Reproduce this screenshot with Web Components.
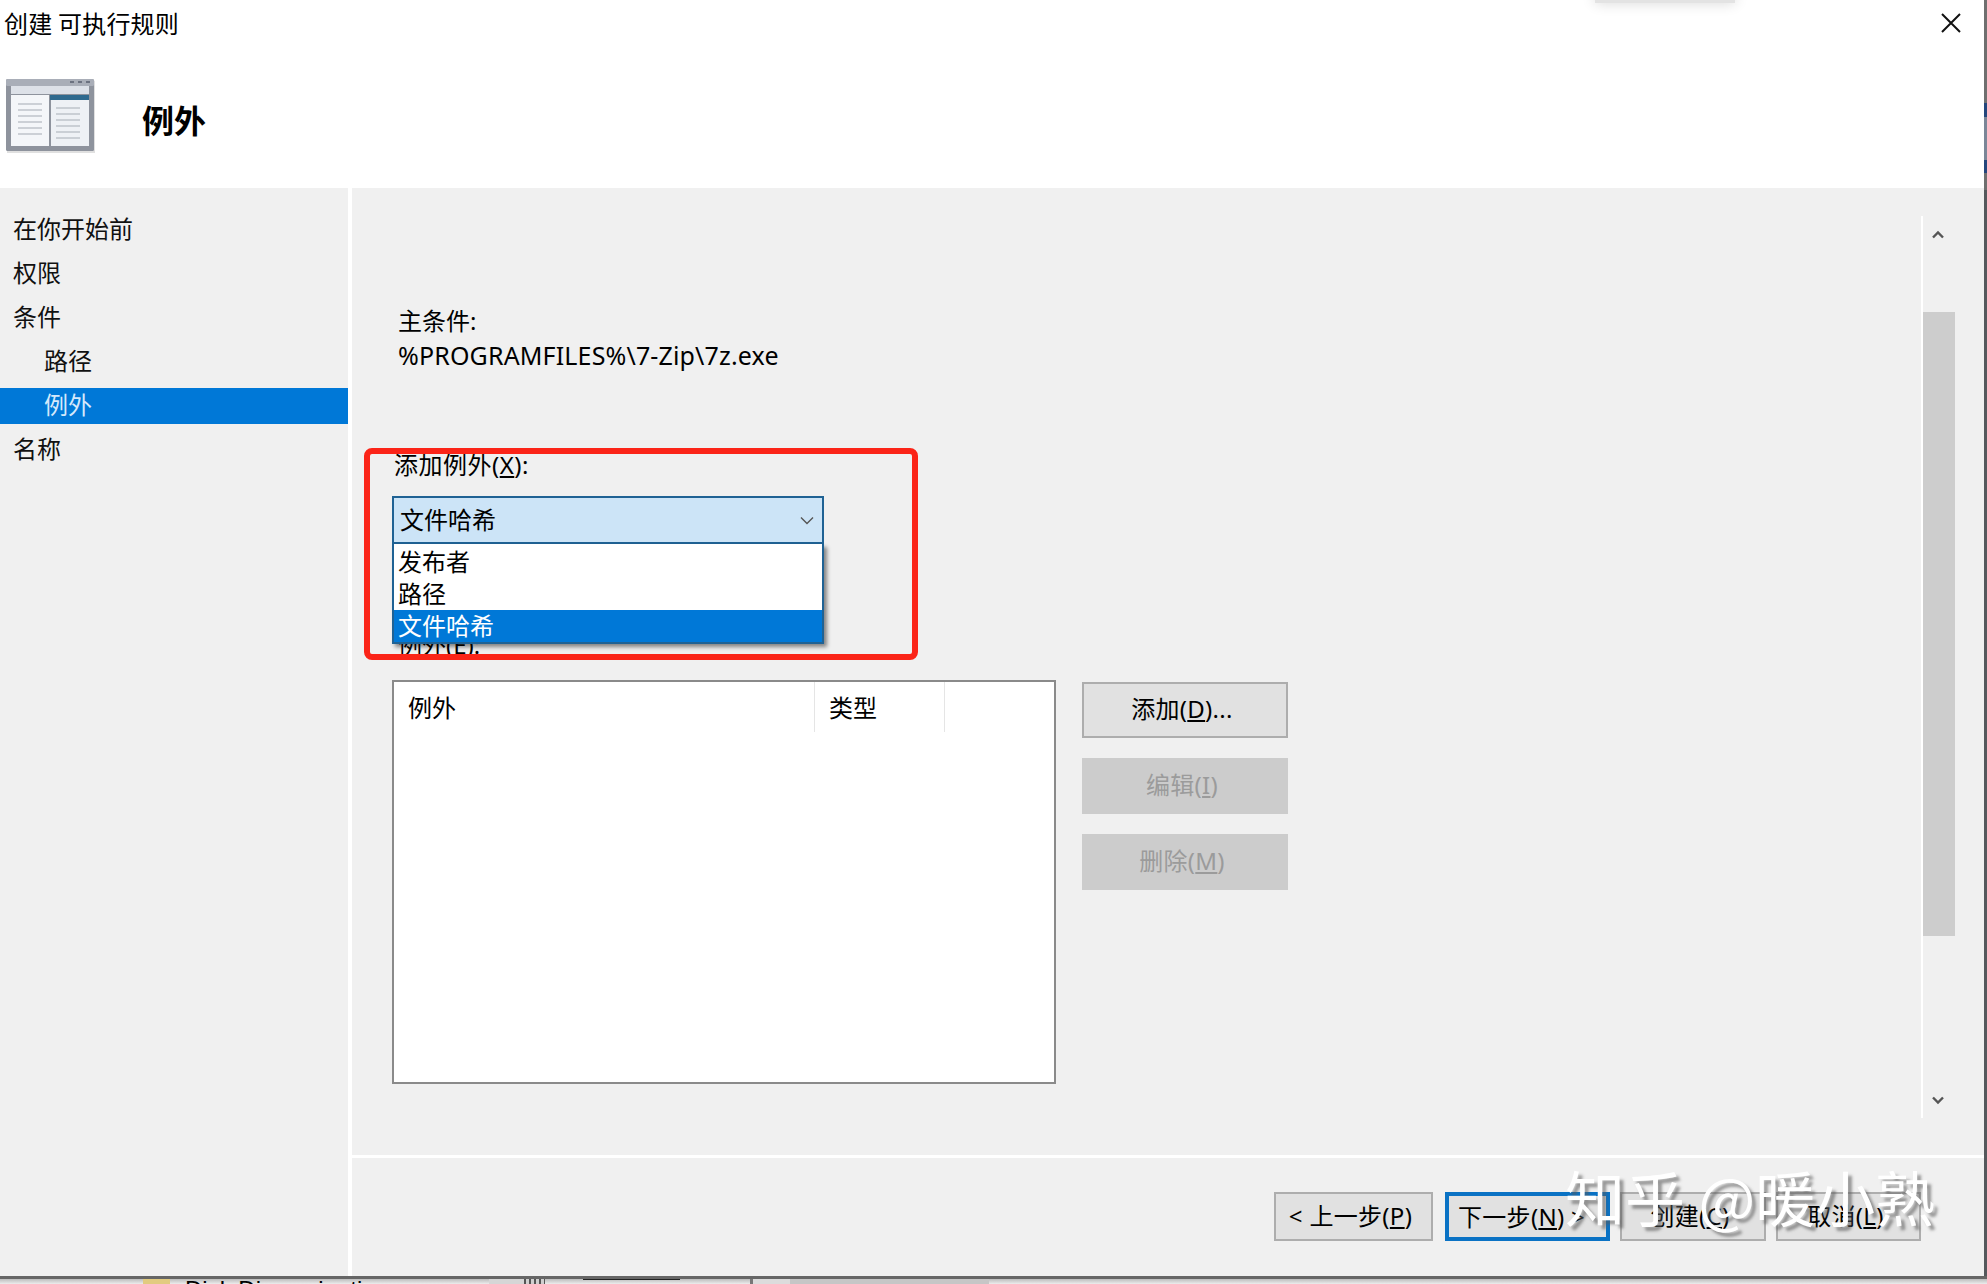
<!DOCTYPE html>
<html lang="zh-CN">
<head>
<meta charset="utf-8">
<title>创建 可执行规则</title>
<style>
  html, body { margin: 0; height: 100%; overflow: hidden; background: #f0f0f0; }
  body { font: 24px "Noto Sans", "Noto Sans CJK SC", sans-serif; color: #000; }
</style>
</head>
<body>

<desktop-page>
  <wizard-window>
    <wizard-header slot="header" heading="例外" caption="创建 可执行规则"></wizard-header>
    <wizard-nav slot="nav">
      <nav-item>在你开始前</nav-item>
      <nav-item>权限</nav-item>
      <nav-item>条件</nav-item>
      <nav-item indent>路径</nav-item>
      <nav-item indent selected>例外</nav-item>
      <nav-item>名称</nav-item>
    </wizard-nav>
    <exception-form slot="content"></exception-form>
    <wizard-scrollbar slot="scrollbar"></wizard-scrollbar>
    <push-button slot="footer" style="width:159px;margin-right:2px">&lt; 上一步(<u>P</u>)</push-button>
    <push-button slot="footer" primary style="width:165px">下一步(<u>N</u>) &gt;</push-button>
    <push-button slot="footer" style="width:146px">创建(<u>C</u>)</push-button>
    <push-button slot="footer" style="width:145px">取消(<u>L</u>)</push-button>
  </wizard-window>
</desktop-page>

<script>
class DesktopPage extends HTMLElement {
  constructor() {
    super();
    this.attachShadow({ mode: "open" });
    this.shadowRoot.innerHTML = `
      <style>
        :host { display: grid; grid-template-columns: 1fr 3px; grid-template-rows: 1276px 3px 5px; width: 1987px; height: 1284px; overflow: hidden; }
        .edge {
          background: linear-gradient(#6f6f6f 0 103px, #24467c 103px 117px, #7b8698 117px 160px, #24467c 160px 173px, #6f6f6f 173px 190px, #55585c 190px 100%);
        }
        .line { grid-column: 1 / 3; background: #666; }
        .strip {
          grid-column: 1 / 3; display: flex; overflow: hidden; position: relative;
          background: linear-gradient(#bdbdbd, #ececec);
          font: 24px "Liberation Sans", sans-serif;
        }
        .strip div { flex: none; height: 5px; }
        .folder { width: 27px; margin-left: 143px; background: #e2cb80; }
        .name { width: 304px; margin-left: 15px; line-height: 22px; white-space: nowrap; overflow: hidden; }
        .a { width: 35px; background: #d6d6d6; }
        .b { width: 21px; background: repeating-linear-gradient(90deg, #555 0 2px, #cfcfcf 2px 5px); }
        .c { width: 38px; }
        .d { width: 97px; background: linear-gradient(#222 0 1px, transparent 1px); }
        .e { width: 70px; }
        .f { width: 3px; background: #777; }
        .g { width: 37px; background: #dcdcdc; }
        .h { width: 199px; background: #c6c6c6; }
      </style>
      <slot></slot>
      <div class="edge"></div>
      <div class="line"></div>
      <div class="strip">
        <div class="folder"></div>
        <div class="name">Disk Dissemination</div>
        <div class="a"></div><div class="b"></div><div class="c"></div><div class="d"></div>
        <div class="e"></div><div class="f"></div><div class="g"></div><div class="h"></div>
      </div>`;
  }
}

class WizardWindow extends HTMLElement {
  constructor() {
    super();
    this.attachShadow({ mode: "open" });
    this.shadowRoot.innerHTML = `
      <style>
        :host { display: flex; flex-direction: column; position: relative; background: #fff; overflow: hidden; min-width: 0; }
        .body { flex: 1; display: flex; min-height: 0; }
        .nav { width: 348px; border-right: 4px solid #fff; background: #f0f0f0; flex: none; }
        .main { flex: 1; display: flex; flex-direction: column; background: #f0f0f0; min-width: 0; }
        .content { flex: 1; display: flex; min-height: 0; }
        .form { flex: 1; min-width: 0; }
        .footer {
          height: 121px; flex: none; box-sizing: border-box; border-top: 3px solid #fff;
          display: flex; justify-content: flex-end; align-items: flex-start; gap: 10px;
          padding: 34px 63px 0 0;
        }
        .peek {
          position: absolute; left: 1595px; top: -10px; width: 140px; height: 13px;
          background: #e3e3e3; box-shadow: 0 0 14px rgba(0, 0, 0, .16);
        }
        .highlight {
          position: absolute; left: 364px; top: 448px; width: 554px; height: 212px;
          box-sizing: border-box; border: 6px solid #fb2418; border-radius: 8px; pointer-events: none;
        }
        .watermark {
          position: absolute; left: 1565px; top: 1162px; white-space: nowrap; pointer-events: none;
          font: 400 60px/68px "Noto Sans CJK SC", "Noto Sans", sans-serif; color: #fff;
          text-shadow: 4px 4px 3px rgba(90, 90, 90, .6);
        }
      </style>
      <slot name="header"></slot>
      <div class="body">
        <div class="nav"><slot name="nav"></slot></div>
        <div class="main">
          <div class="content">
            <div class="form"><slot name="content"></slot></div>
            <slot name="scrollbar"></slot>
          </div>
          <div class="footer"><slot name="footer"></slot></div>
        </div>
      </div>
      <div class="peek"></div>
      <div class="highlight"></div>
      <div class="watermark">知乎 @暖小熟</div>`;
  }
}

class WizardHeader extends HTMLElement {
  constructor() {
    super();
    this.attachShadow({ mode: "open" });
    const caption = this.getAttribute("caption");
    const heading = this.getAttribute("heading");
    this.shadowRoot.innerHTML = `
      <style>
        :host { display: block; background: #fff; flex: none; font-family: "Noto Sans CJK SC", sans-serif; }
        .title { height: 48px; display: flex; align-items: center; justify-content: space-between; padding: 0 23px 3px 4px; box-sizing: border-box; font-size: 24px; }
        .title span { letter-spacing: .2px; }
        .title svg { display: block; }
        .banner { height: 140px; box-sizing: border-box; display: flex; align-items: center; gap: 46px; padding: 0 0 3px 6px; }
        h1 { margin: 5px 0 0; font-size: 32px; font-weight: 700; line-height: 40px; }
      </style>
      <div class="title">
        <span>${caption}</span>
        <svg width="20" height="20" viewBox="0 0 20 20"><path d="M1 1 L19 19 M19 1 L1 19" stroke="#111" stroke-width="2" fill="none"/></svg>
      </div>
      <div class="banner">
        <svg width="90" height="75" viewBox="0 0 90 75">
          <rect x="1" y="2" width="88" height="72" fill="#000" opacity=".12"/>
          <rect x="0" y="0" width="88" height="72" rx="1.5" fill="#8e939d"/>
          <rect x="0" y="0" width="88" height="7" rx="1.5" fill="#a9aeb8"/>
          <path d="M64 3h4M72 3h4M80 3h4" stroke="#6c7280" stroke-width="2"/>
          <rect x="5" y="7" width="78" height="8" fill="#dde1e8"/>
          <rect x="5" y="16" width="38" height="51" fill="#f4f6f9"/>
          <rect x="45" y="16" width="38" height="51" fill="#eef1f5"/>
          <rect x="44" y="16" width="39" height="5" fill="#2f6a8f"/>
          <path d="M12 25h24M12 31h24M12 37h24M12 43h24M12 49h24M12 55h24" stroke="#bfc3ca" stroke-width="1.5"/>
          <path d="M50 29h24M50 35h24M50 41h24M50 47h24M50 53h24M50 59h24" stroke="#bfc3ca" stroke-width="1.5"/>
        </svg>
        <h1>${heading}</h1>
      </div>`;
  }
}

class WizardNav extends HTMLElement {
  constructor() {
    super();
    this.attachShadow({ mode: "open" });
    this.shadowRoot.innerHTML = `
      <style>:host { display: flex; flex-direction: column; gap: 8px; padding-top: 24px; }</style>
      <slot></slot>`;
  }
}

class NavItem extends HTMLElement {
  constructor() {
    super();
    this.attachShadow({ mode: "open" });
    this.shadowRoot.innerHTML = `
      <style>
        :host { display: block; height: 36px; line-height: 32px; padding-left: 13px; font-family: "Noto Sans CJK SC", sans-serif; font-size: 24px; color: #111; }
        :host([indent]) { padding-left: 44px; }
        :host([selected]) { background: #0078d7; color: #d5e9fb; }
      </style>
      <slot></slot>`;
  }
}

class ExceptionForm extends HTMLElement {
  constructor() {
    super();
    this.attachShadow({ mode: "open" });
    this.shadowRoot.innerHTML = `
      <style>
        :host { display: block; padding: 116px 0 0 46px; font-family: "Noto Sans", "Noto Sans CJK SC", sans-serif; font-size: 24px; }
        .line { height: 34px; line-height: 34px; white-space: nowrap; }
        .path { font-size: 25px; letter-spacing: .15px; }
        .add { margin: 76px 0 0 -4px; letter-spacing: .5px; }
        combo-box { margin: 14px 0 0 -6px; }
        .list-label { margin-top: 84px; }
        .row { display: flex; margin: 18px 0 0 -6px; align-items: flex-start; }
        .actions { display: flex; flex-direction: column; gap: 20px; margin: 2px 0 0 26px; width: 206px; }
        u { text-underline-offset: 2px; }
      </style>
      <div class="line">主条件:</div>
      <div class="line path">%PROGRAMFILES%\\7-Zip\\7z.exe</div>
      <div class="line add">添加例外(<u>X</u>):</div>
      <combo-box value="文件哈希">
        <combo-option>发布者</combo-option>
        <combo-option>路径</combo-option>
        <combo-option selected>文件哈希</combo-option>
      </combo-box>
      <div class="line list-label">例外(<u>E</u>):</div>
      <div class="row">
        <list-view>
          <list-column style="width:421px">例外</list-column>
          <list-column style="width:130px">类型</list-column>
        </list-view>
        <div class="actions">
          <push-button block>添加(<u>D</u>)...</push-button>
          <push-button block disabled>编辑(<u>I</u>)</push-button>
          <push-button block disabled>删除(<u>M</u>)</push-button>
        </div>
      </div>`;
  }
}

class ComboBox extends HTMLElement {
  constructor() {
    super();
    this.attachShadow({ mode: "open" });
    this.shadowRoot.innerHTML = `
      <style>
        :host { display: block; position: relative; width: 432px; height: 48px; z-index: 1; }
        .field {
          box-sizing: border-box; height: 48px; border: 2px solid #1f6294; background: #cce4f7;
          display: flex; align-items: center; justify-content: space-between;
          padding: 0 8px 0 6px; line-height: 44px;
        }
        .popup {
          position: absolute; left: 0; top: 48px; width: 432px; box-sizing: border-box;
          background: #fff; border: 2px solid #1f6294; border-top: 0; padding-top: 2px;
          display: flex; flex-direction: column;
          box-shadow: 3px 3px 4px rgba(0, 0, 0, .45);
        }
      </style>
      <div class="field">
        <span>${this.getAttribute("value")}</span>
        <svg width="14" height="9" viewBox="0 0 14 9"><path d="M1 1.5 L7 7.5 L13 1.5" stroke="#555" stroke-width="1.4" fill="none"/></svg>
      </div>
      <div class="popup"><slot></slot></div>`;
  }
}

class ComboOption extends HTMLElement {
  constructor() {
    super();
    this.attachShadow({ mode: "open" });
    this.shadowRoot.innerHTML = `
      <style>
        :host { display: block; height: 32px; line-height: 31px; padding-left: 4px; font-size: 24px; }
        :host([selected]) { background: #0078d7; color: #fff; }
      </style>
      <slot></slot>`;
  }
}

class ListView extends HTMLElement {
  constructor() {
    super();
    this.attachShadow({ mode: "open" });
    this.shadowRoot.innerHTML = `
      <style>
        :host { display: block; width: 664px; height: 404px; box-sizing: border-box; border: 2px solid #8a8a8a; background: #fff; }
        .head { display: flex; height: 50px; }
      </style>
      <div class="head"><slot></slot></div>`;
  }
}

class ListColumn extends HTMLElement {
  constructor() {
    super();
    this.attachShadow({ mode: "open" });
    this.shadowRoot.innerHTML = `
      <style>
        :host { display: block; box-sizing: border-box; height: 50px; line-height: 52px; padding-left: 14px; border-right: 1px solid #e5e5e5; }
      </style>
      <slot></slot>`;
  }
}

class PushButton extends HTMLElement {
  constructor() {
    super();
    this.attachShadow({ mode: "open" });
    this.shadowRoot.innerHTML = `
      <style>
        :host {
          display: flex; align-items: center; justify-content: center; box-sizing: border-box;
          height: 49px; border: 2px solid #adadad; background: #e1e1e1; color: #000;
          padding: 0 6px 5px 0; letter-spacing: .3px;
          font-family: "Noto Sans", "Noto Sans CJK SC", sans-serif; font-size: 24px; white-space: nowrap;
        }
        :host([block]) { height: 56px; }
        :host([primary]) { border: 4px solid #0a72c4; padding: 0 12px 3px 0; }
        :host([disabled]) { background: #cccccc; border-color: #cccccc; color: #9b9b9b; }
      </style>
      <span><slot></slot></span>`;
  }
}

class WizardScrollbar extends HTMLElement {
  constructor() {
    super();
    this.attachShadow({ mode: "open" });
    this.shadowRoot.innerHTML = `
      <style>
        :host { display: flex; flex-direction: column; flex: none; box-sizing: border-box; width: 34px; margin: 28px 29px 37px 0; border-left: 2px solid #fff; }
        .arrow { height: 36px; display: flex; align-items: center; justify-content: center; flex: none; margin-right: 2px; }
        .thumb { height: 624px; margin-top: 60px; background: #cdcdcd; flex: none; }
        .spacer { flex: 1; }
      </style>
      <div class="arrow"><svg width="12" height="9" viewBox="0 0 12 9"><path d="M1 7.5 L6 2.5 L11 7.5" stroke="#555" stroke-width="2.4" fill="none"/></svg></div>
      <div class="thumb"></div>
      <div class="spacer"></div>
      <div class="arrow"><svg width="12" height="9" viewBox="0 0 12 9"><path d="M1 1.5 L6 6.5 L11 1.5" stroke="#555" stroke-width="2.4" fill="none"/></svg></div>`;
  }
}

customElements.define("desktop-page", DesktopPage);
customElements.define("wizard-window", WizardWindow);
customElements.define("wizard-header", WizardHeader);
customElements.define("wizard-nav", WizardNav);
customElements.define("nav-item", NavItem);
customElements.define("exception-form", ExceptionForm);
customElements.define("combo-box", ComboBox);
customElements.define("combo-option", ComboOption);
customElements.define("list-view", ListView);
customElements.define("list-column", ListColumn);
customElements.define("push-button", PushButton);
customElements.define("wizard-scrollbar", WizardScrollbar);
</script>
</body>
</html>
